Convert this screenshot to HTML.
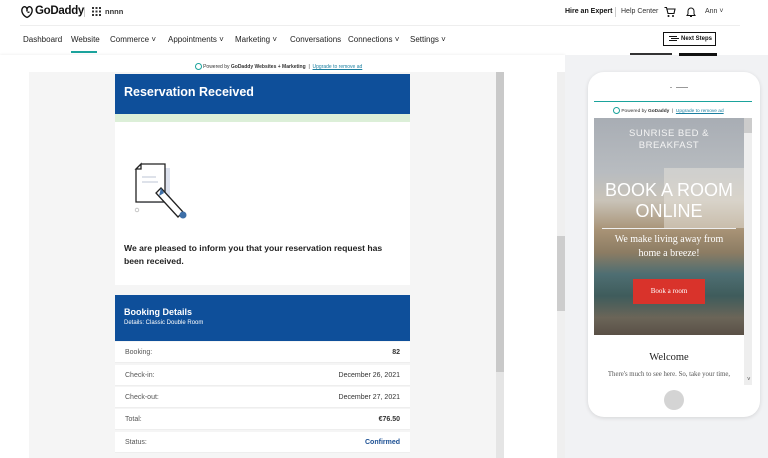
<!DOCTYPE html>
<html><head><meta charset="utf-8"><style>
*{margin:0;padding:0;box-sizing:border-box}
body{width:768px;height:458px;overflow:hidden;background:#fff;font-family:"Liberation Sans",sans-serif;position:relative;color:#111}
.a{position:absolute}
.nav span{position:absolute;top:35px;font-size:8px;color:#222}
.row{position:absolute;left:115px;width:295px;height:21px;background:#fff;font-size:7px;color:#444;border-bottom:1px solid #eee}
.row b,.row i{position:absolute;top:7px;font-style:normal}
.row i{right:10px;color:#333}
.row b{left:10px;font-weight:normal;color:#555}
</style></head><body>
<svg class="a" style="left:20px;top:5px" width="14" height="14" viewBox="0 0 14 14"><path d="M7 12.5C2 10 1 5.5 2.5 3S7.5 1.5 7 6.5M7 12.5c5-2.5 6-7 4.5-9.5S6.5 1.5 7 6.5" fill="none" stroke="#111" stroke-width="1.4"/><path d="M7.5 7.5l2-.5" stroke="#111" stroke-width="1.2"/></svg>
<div class="a" style="left:35px;top:5px;font-size:11.5px;font-weight:bold;letter-spacing:-.3px">GoDaddy</div>
<div class="a" style="left:84px;top:7px;width:1px;height:10px;background:#ccc"></div>
<svg class="a" style="left:92px;top:7px" width="9" height="9"><g fill="#333"><rect x="0" y="0" width="2" height="2"/><rect x="3.5" y="0" width="2" height="2"/><rect x="7" y="0" width="2" height="2"/><rect x="0" y="3.5" width="2" height="2"/><rect x="3.5" y="3.5" width="2" height="2"/><rect x="7" y="3.5" width="2" height="2"/><rect x="0" y="7" width="2" height="2"/><rect x="3.5" y="7" width="2" height="2"/><rect x="7" y="7" width="2" height="2"/></g></svg>
<div class="a" style="left:105px;top:7px;font-size:7.5px;font-weight:bold;color:#333">nnnn</div>
<div class="a" style="left:565px;top:8px;font-size:7px;font-weight:bold">Hire an Expert</div>
<div class="a" style="left:615px;top:7px;width:1px;height:10px;background:#ccc"></div>
<div class="a" style="left:621px;top:8px;font-size:7px;color:#333">Help Center</div>
<svg class="a" style="left:664px;top:6px" width="12" height="12" viewBox="0 0 12 12"><path d="M0.5 1.5h2l1.5 6h6l1-4.5H3" fill="none" stroke="#111" stroke-width="1.1"/><circle cx="4.5" cy="10" r="1" fill="#111"/><circle cx="9" cy="10" r="1" fill="#111"/></svg>
<svg class="a" style="left:686px;top:6px" width="10" height="12" viewBox="0 0 10 12"><path d="M2 8V5a3 3 0 016 0v3l1 1.5H1z M4 10.5h2" fill="none" stroke="#111" stroke-width="1"/></svg>
<div class="a" style="left:705px;top:8px;font-size:7px;color:#333">Ann ˅</div>
<div class="a" style="left:20px;top:25px;width:720px;height:1px;background:#eee"></div>
<div class="nav">
<span style="left:23px">Dashboard</span><span style="left:71px">Website</span><span style="left:110px">Commerce ˅</span><span style="left:168px">Appointments ˅</span><span style="left:235px">Marketing ˅</span><span style="left:290px">Conversations</span><span style="left:348px">Connections ˅</span><span style="left:410px">Settings ˅</span>
</div>
<div class="a" style="left:71px;top:51px;width:26px;height:2px;background:#1ba39c"></div>
<div class="a" style="left:663px;top:32px;width:53px;height:14px;border:1.2px solid #111;font-size:6px;font-weight:bold;padding:3px 0 0 17px">Next Steps</div>
<div class="a" style="left:669px;top:36px;width:8px;height:1px;background:#111;box-shadow:2px 2px 0 #111,0 4px 0 #111"></div>
<div class="a" style="left:0;top:55px;width:565px;height:403px;background:#fff;box-shadow:0 -1px 2px rgba(0,0,0,.05)"></div>
<div class="a" style="left:29px;top:72px;width:467px;height:386px;background:#f5f5f5"></div>
<div class="a" style="left:496px;top:72px;width:8px;height:386px;background:#e5e5e5"></div>
<div class="a" style="left:496px;top:72px;width:8px;height:300px;background:#c9c9c9"></div>
<div class="a" style="left:557px;top:72px;width:8px;height:386px;background:#efefef"></div>
<div class="a" style="left:557px;top:236px;width:8px;height:75px;background:#cdcdcd"></div>
<div class="a" style="left:0;top:60px;width:557px;height:12px;background:#fff;font-size:5px;color:#333;text-align:center;padding-top:3px">
<span style="display:inline-block;width:7px;height:7px;border:1.2px solid #1ba39c;border-radius:50%;vertical-align:-2px"></span> Powered by <b>GoDaddy Websites + Marketing</b> &nbsp;| &nbsp;<u style="color:#1b7fa0">Upgrade to remove ad</u></div>
<div class="a" style="left:115px;top:74px;width:295px;height:40px;background:#0e4f9a;color:#fff;font-size:12.5px;font-weight:bold;padding:11px 9px">Reservation Received</div>
<div class="a" style="left:115px;top:114px;width:295px;height:8px;background:#dcefd8"></div>
<div class="a" style="left:115px;top:122px;width:295px;height:163px;background:#fff"></div>
<svg class="a" style="left:130px;top:155px" width="65" height="70" viewBox="0 0 65 70">
<rect x="10" y="13" width="30" height="35" fill="#dde2ee"/>
<path d="M6 14l5-5v5zM11 9h24v38H6V14" fill="#fff" stroke="#222" stroke-width="1.3"/>
<path d="M12 22h14M12 27h16" stroke="#bcc5d6" stroke-width="1"/>
<path d="M31 33l22 24-5 5-22-24z" fill="#fff" stroke="#222" stroke-width="1.3"/>
<path d="M31 33l-2 8 5-3z" fill="#3d6fa8"/>
<circle cx="53" cy="60" r="3.5" fill="#3d6fa8"/>
<circle cx="7" cy="55" r="1.8" fill="none" stroke="#bbb" stroke-width=".8"/>
</svg>
<div class="a" style="left:124px;top:242px;width:280px;font-size:8.6px;font-weight:bold;line-height:13px;color:#222">We are pleased to inform you that your reservation request has been received.</div>
<div class="a" style="left:115px;top:295px;width:295px;height:46px;background:#0e4f9a;color:#fff;padding:12px 9px">
<div style="font-size:9px;font-weight:bold">Booking Details</div>
<div style="font-size:6px;margin-top:3px">Details: Classic Double Room</div></div>
<div class="row" style="top:342px"><b>Booking:</b><i style="font-weight:bold">82</i></div>
<div class="row" style="top:365px"><b>Check-in:</b><i>December 26, 2021</i></div>
<div class="row" style="top:387px"><b>Check-out:</b><i>December 27, 2021</i></div>
<div class="row" style="top:409px"><b>Total:</b><i style="font-weight:bold">€76.50</i></div>
<div class="row" style="top:432px"><b>Status:</b><i style="font-weight:bold;color:#1b4f93">Confirmed</i></div>
<div class="a" style="left:565px;top:55px;width:203px;height:403px;background:#f1f2f4"></div>
<div class="a" style="left:630px;top:53px;width:42px;height:2px;background:#333"></div>
<div class="a" style="left:679px;top:53px;width:38px;height:3px;background:#111"></div>
<div class="a" style="left:588px;top:72px;width:172px;height:345px;background:#fff;border-radius:16px;box-shadow:0 1px 4px rgba(0,0,0,.12)"></div>
<div class="a" style="left:670px;top:87px;width:2px;height:1px;background:#aaa"></div>
<div class="a" style="left:676px;top:87px;width:12px;height:1px;background:#999"></div>
<div class="a" style="left:594px;top:101px;width:158px;height:1px;background:#1ba39c"></div>
<div class="a" style="left:594px;top:102px;width:158px;height:16px;font-size:4.8px;color:#333;padding-top:5px;padding-left:19px">
<span style="display:inline-block;width:7px;height:7px;border:1.2px solid #1ba39c;border-radius:50%;vertical-align:-2px"></span> Powered by <b>GoDaddy</b> &nbsp;| &nbsp;<u style="color:#1b7fa0">Upgrade to remove ad</u></div>
<div class="a" style="left:594px;top:118px;width:150px;height:217px;overflow:hidden;background:linear-gradient(180deg,#a8adb4 0%,#b8bcc0 25%,#c9c3b8 38%,#a79275 52%,#8c7c63 62%,#4e6e72 72%,#3f5c5c 82%,#6b6558 92%,#5a5046 100%)">
<div class="a" style="left:70px;top:50px;width:80px;height:60px;background:#e8e4dc;opacity:.5"></div>
<div class="a" style="left:0;top:10px;width:150px;text-align:center;color:#f4f4f4;font-size:9.5px;line-height:12px;letter-spacing:.5px">SUNRISE BED &amp;<br>BREAKFAST</div>
<div class="a" style="left:0;top:62px;width:150px;text-align:center;color:#fff;font-size:18px;line-height:21px">BOOK A ROOM<br>ONLINE</div>
<div class="a" style="left:8px;top:110px;width:134px;height:1px;background:#eee"></div>
<div class="a" style="left:0;top:115px;width:150px;text-align:center;color:#fff;font-family:'Liberation Serif',serif;font-size:10px;line-height:14px">We make living away from<br>home a breeze!</div>
<div class="a" style="left:39px;top:161px;width:72px;height:25px;background:#d9332b;color:#fff;font-family:'Liberation Serif',serif;font-size:7px;text-align:center;line-height:25px">Book a room</div>
</div>
<div class="a" style="left:744px;top:118px;width:8px;height:267px;background:#eee"></div>
<div class="a" style="left:744px;top:118px;width:8px;height:15px;background:#ccc"></div>
<div class="a" style="left:594px;top:335px;width:150px;height:50px;background:#fff;font-family:'Liberation Serif',serif;text-align:center">
<div style="font-size:10.5px;margin-top:17px;color:#222">Welcome</div>
<div style="font-size:6.8px;margin-top:8px;color:#555">There's much to see here. So, take your time,</div></div>
<div class="a" style="left:747px;top:377px;font-size:6px;color:#555">˅</div>
<div class="a" style="left:664px;top:390px;width:20px;height:20px;border-radius:50%;background:#d4d4d4"></div>
</body></html>
